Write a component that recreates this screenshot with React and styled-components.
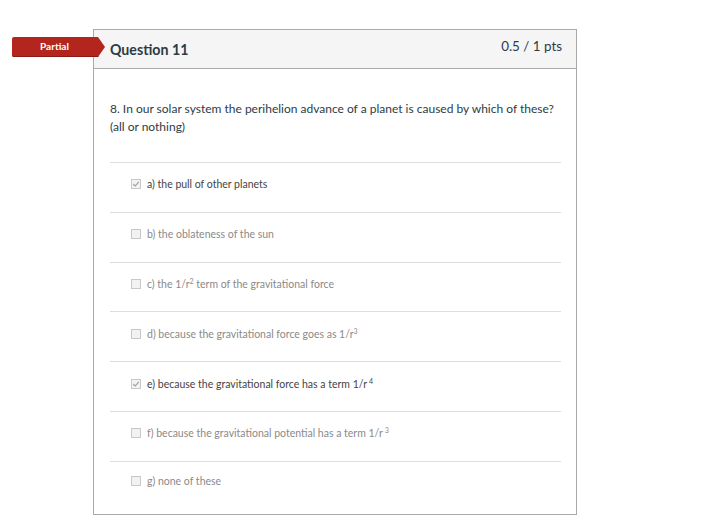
import React from "react"
import styled, { createGlobalStyle } from "styled-components"

const GlobalStyle = createGlobalStyle`
  body {
    margin: 0;
    background: #fff;
    font-family: Lato, "Open Sans", sans-serif;
  }
`

const Page = styled.div`
  padding: 29px 0 0 93px;
`

const Card = styled.div`
  position: relative;
  width: 482px;
  height: 484px;
  border: 1px solid #aaa;
  background: #fff;
`

const Badge = styled.div`
  position: absolute;
  left: -82px;
  top: 7px;
  width: 93px;
  height: 20px;
  background: #b3261e;
  color: #fff;
  font-size: 10px;
  font-weight: 700;
  line-height: 18px;
  padding-right: 8px;
  box-sizing: border-box;
  text-align: center;
  clip-path: polygon(0 0, 86px 0, 93px 50%, 86px 100%, 0 100%);
  border-radius: 2px 0 0 2px;
  box-shadow: inset 0 -1px 0 #8a1a14;
`

const Header = styled.div`
  display: flex;
  justify-content: space-between;
  align-items: flex-start;
  height: 38px;
  padding: 0 14px 0 16px;
  background: #f5f5f5;
  border-bottom: 1px solid #aaa;
`

const Title = styled.h2`
  margin: 11px 0 0;
  font-size: 14.2px;
  font-weight: 700;
  color: #2d3b45;
`

const Points = styled.div`
  margin-top: 8px;
  font-size: 13.4px;
  font-weight: 400;
  color: #2d3b45;
`

const Body = styled.div`
  padding: 31px 15px 0 16px;
`

const QuestionText = styled.p`
  margin: 0 0 26px;
  font-size: 12px;
  line-height: 18px;
  color: #2d3b45;
`

const AnswerList = styled.ul`
  list-style: none;
  margin: 0;
  padding: 0;
`

const Answer = styled.li`
  display: flex;
  align-items: center;
  gap: 6px;
  height: ${(p) => (p.$last ? "40px" : "49.8px")};
  padding: ${(p) => (p.$last ? "0 0 0 21px" : "0 0 6px 21px")};
  box-sizing: border-box;
  border-top: 1px solid #ddd;
  font-size: 10.5px;
  color: ${(p) => (p.$checked ? "#444" : "#8a8a8a")};
`

const Box = styled.span`
  display: inline-flex;
  align-items: center;
  justify-content: center;
  width: 10px;
  height: 10px;
  box-sizing: border-box;
  border: 1px solid #c8c8c8;
  background: #f2f2f2;
`

const Sup = styled.sup`
  font-size: 7px;
  vertical-align: 4px;
  line-height: 0;
  margin-left: ${(p) => (p.$spaced ? "2px" : "0")};
`

function Checkbox({ checked }) {
  return (
    <Box>
      {checked && (
        <svg width="8" height="8" viewBox="0 0 8 8">
          <path d="M1.3 4.2 L3.2 6 L6.8 1.8" fill="none" stroke="#9a9a9a" strokeWidth="1.1" />
        </svg>
      )}
    </Box>
  )
}

const answers = [
  { checked: true, label: <>a) the pull of other planets</> },
  { checked: false, label: <>b) the oblateness of the sun</> },
  { checked: false, label: <>c) the 1/r<Sup>2</Sup> term of the gravitational force</> },
  { checked: false, label: <>d) because the gravitational force goes as 1/r<Sup>3</Sup></> },
  { checked: true, label: <>e) because the gravitational force has a term 1/r<Sup $spaced>4</Sup></> },
  { checked: false, label: <>f) because the gravitational potential has a term 1/r<Sup $spaced>3</Sup></> },
  { checked: false, label: <>g) none of these</> },
]

export default function App() {
  return (
    <Page>
      <GlobalStyle />
      <Card>
        <Badge>Partial</Badge>
        <Header>
          <Title>Question 11</Title>
          <Points>0.5 / 1 pts</Points>
        </Header>
        <Body>
          <QuestionText>
            8. In our solar system the perihelion advance of a planet is caused by which of these?
            <br />
            (all or nothing)
          </QuestionText>
          <AnswerList>
            {answers.map((a, i) => (
              <Answer key={i} $checked={a.checked} $last={i === answers.length - 1}>
                <Checkbox checked={a.checked} />
                <span>{a.label}</span>
              </Answer>
            ))}
          </AnswerList>
        </Body>
      </Card>
    </Page>
  )
}
